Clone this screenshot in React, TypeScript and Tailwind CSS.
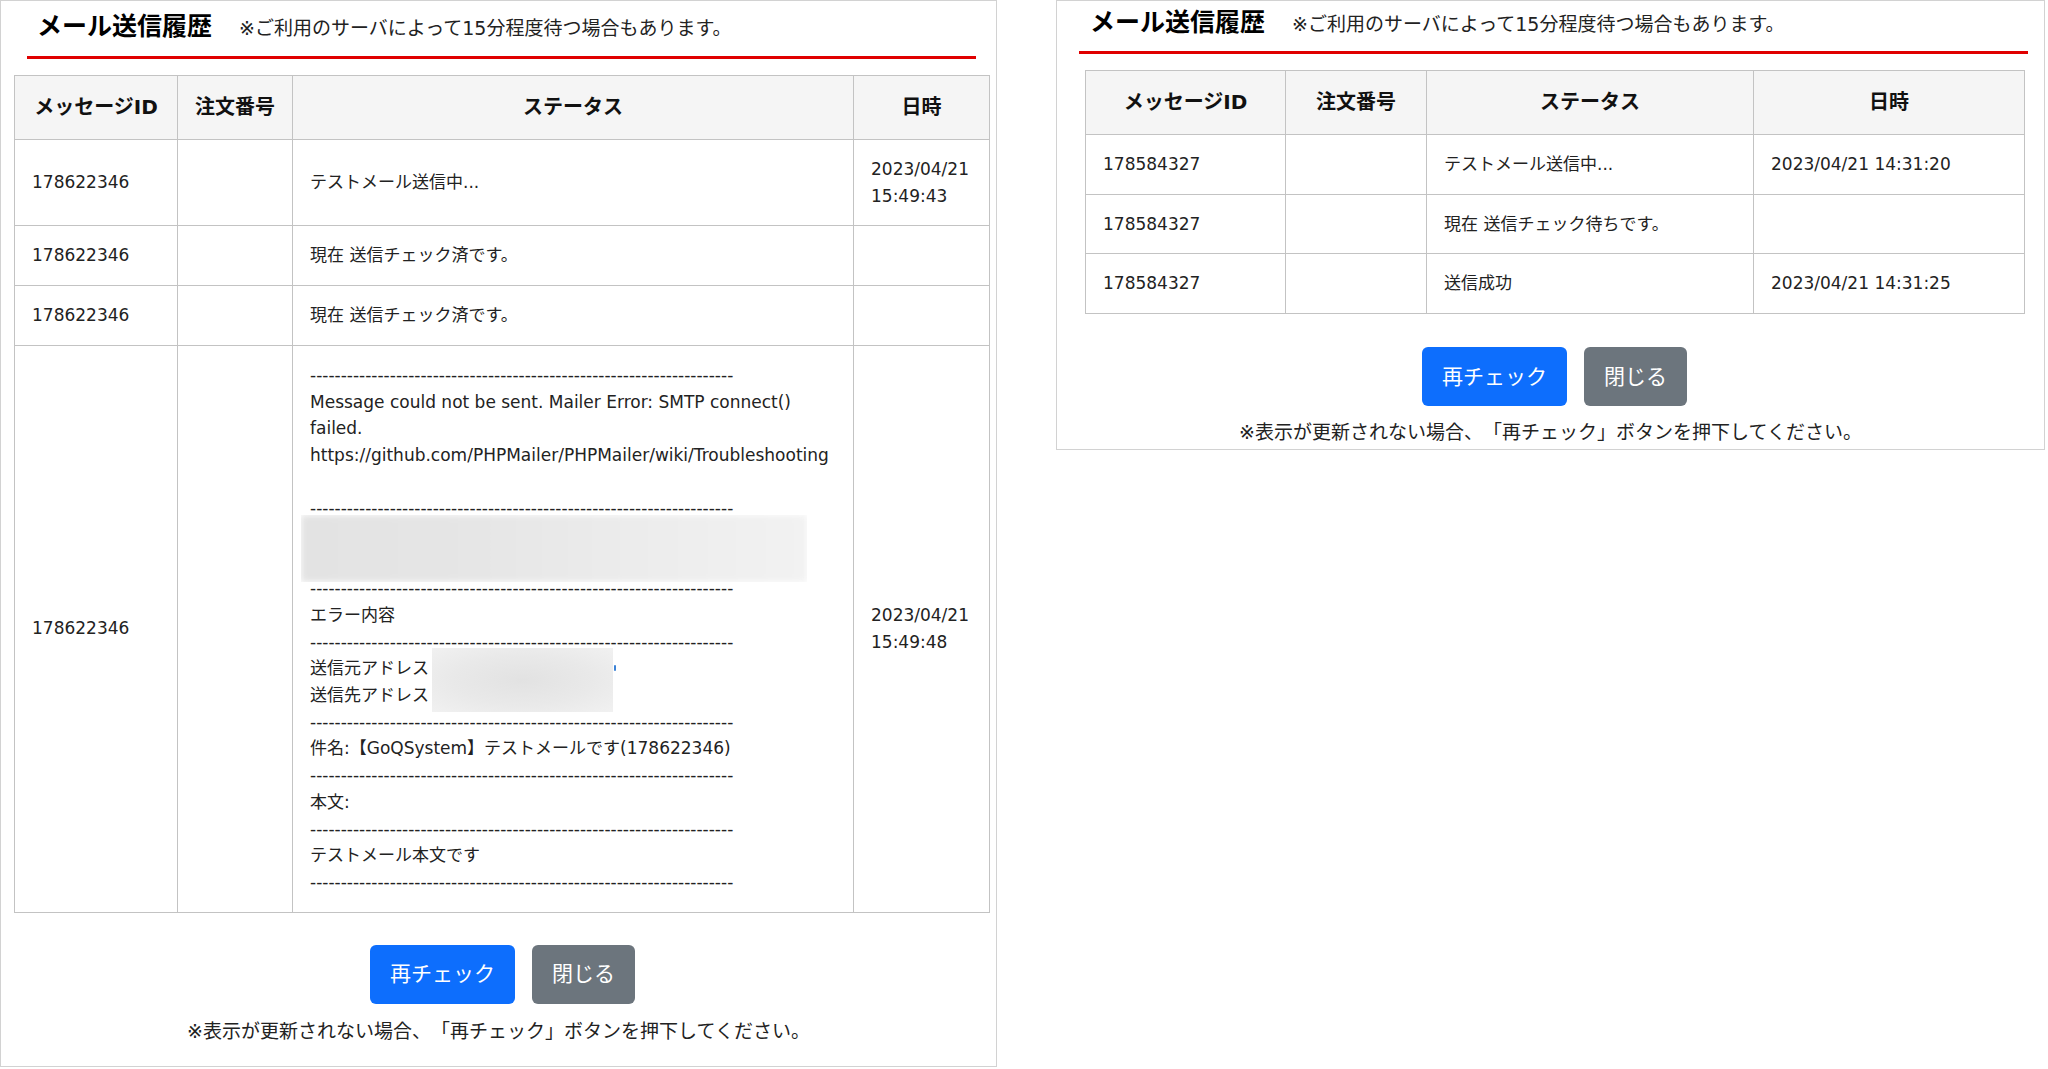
import React from "react";

const DASH = "-".repeat(69);

type Row = { id: string; status: React.ReactNode; date: string[] };

const leftRows: Row[] = [
  { id: "178622346", status: "テストメール送信中...", date: ["2023/04/21", "15:49:43"] },
  { id: "178622346", status: "現在 送信チェック済です。", date: [] },
  { id: "178622346", status: "現在 送信チェック済です。", date: [] },
];

const rightRows: Row[] = [
  { id: "178584327", status: "テストメール送信中...", date: ["2023/04/21 14:31:20"] },
  { id: "178584327", status: "現在 送信チェック待ちです。", date: [] },
  { id: "178584327", status: "送信成功", date: ["2023/04/21 14:31:25"] },
];

function Line({ children }: { children?: React.ReactNode }) {
  return <div className="h-[26.7px] whitespace-nowrap">{children}</div>;
}

function Dashes() {
  return <Line>{DASH}</Line>;
}

function ErrorDetail() {
  return (
    <div>
      <Dashes />
      <Line>Message could not be sent. Mailer Error: SMTP connect()</Line>
      <Line>failed.</Line>
      <Line>https://github.com/PHPMailer/PHPMailer/wiki/Troubleshooting</Line>
      <Line />
      <Dashes />
      <div className="relative h-[53.4px]">
        <div className="absolute left-[-9px] top-[-7px] h-[67px] w-[506px] overflow-hidden">
          <div className="h-full w-full bg-[linear-gradient(90deg,#e3e3e3_0%,#e6e6e6_35%,#ebebeb_60%,#f2f2f2_100%)] blur-[3px]" />
        </div>
      </div>
      <Dashes />
      <Line>エラー内容</Line>
      <Dashes />
      <div className="relative">
        <Line>送信元アドレス</Line>
        <Line>送信先アドレス</Line>
        <div className="absolute left-[122px] top-[-7px] h-[64px] w-[181px] bg-[radial-gradient(ellipse_at_center,#e2e2e2_0%,#e9e9e9_55%,#f1f1f1_100%)]" />
        <div className="absolute left-[304px] top-[10px] h-[6px] w-[2px] rounded-full bg-[#3b82d6]" />
      </div>
      <Dashes />
      <Line>件名:【GoQSystem】テストメールです(178622346)</Line>
      <Dashes />
      <Line>本文:</Line>
      <Dashes />
      <Line>テストメール本文です</Line>
      <Dashes />
    </div>
  );
}

const th =
  "border border-[#c3c3c3] bg-[#f5f5f5] px-2 py-4 text-center align-middle text-[20px] leading-[31px] font-bold text-[#111]";
const td =
  "border border-[#c3c3c3] px-[17px] py-4 text-left align-middle text-[17px] leading-[26.7px] text-[#222]";

function Header({ pt }: { pt: string }) {
  return (
    <div className={pt}>
      <span className="text-[25px] leading-[36px] font-bold text-black">メール送信履歴</span>
      <span className="ml-[27px] text-[19px] leading-[36px] text-[#222]">
        ※ご利用のサーバによって15分程度待つ場合もあります。
      </span>
    </div>
  );
}

function Buttons() {
  return (
    <div className="flex justify-center gap-[17px] pl-[8px]">
      <button className="flex h-[59px] items-center rounded-[6px] bg-[#0d6efd] px-[20px] text-[21px] leading-[30px] text-white">
        再チェック
      </button>
      <button className="flex h-[59px] items-center rounded-[6px] bg-[#6c757d] px-[20px] text-[21px] leading-[30px] text-white">
        閉じる
      </button>
    </div>
  );
}

function Note({ mt }: { mt: string }) {
  return (
    <div className={`${mt} text-center text-[19px] leading-[27px] text-[#222]`}>
      ※表示が更新されない場合、「再チェック」ボタンを押下してください。
    </div>
  );
}

export default function App() {
  return (
    <div className="flex h-[1069px] w-[2048px] items-start gap-[59px] bg-white font-['DejaVu_Sans','Noto_Sans_CJK_JP',sans-serif] [text-spacing-trim:space-all]">
      {/* Left panel */}
      <div className="w-[997px] border border-[#d2d2d2] pb-[21px]">
        <div className="ml-[26px] mr-[20px] border-b-[3px] border-[#e00000] pb-[10px] pl-[10px]">
          <Header pt="pt-[8px]" />
        </div>
        <table className="ml-[13px] mt-[16px] w-[975px] table-fixed border-collapse">
          <colgroup>
            <col className="w-[163px]" />
            <col className="w-[115px]" />
            <col className="w-[561px]" />
            <col className="w-[136px]" />
          </colgroup>
          <thead>
            <tr>
              <th className={th}>メッセージID</th>
              <th className={th}>注文番号</th>
              <th className={th}>ステータス</th>
              <th className={th}>日時</th>
            </tr>
          </thead>
          <tbody>
            {leftRows.map((r, i) => (
              <tr key={i}>
                <td className={td}>{r.id}</td>
                <td className={td}></td>
                <td className={td}>{r.status}</td>
                <td className={td}>
                  {r.date.map((d, j) => (
                    <div key={j} className="whitespace-nowrap">
                      {d}
                    </div>
                  ))}
                </td>
              </tr>
            ))}
            <tr>
              <td className={td}>178622346</td>
              <td className={td}></td>
              <td className={td}>
                <ErrorDetail />
              </td>
              <td className={td}>
                <div className="whitespace-nowrap">2023/04/21</div>
                <div className="whitespace-nowrap">15:49:48</div>
              </td>
            </tr>
          </tbody>
        </table>
        <div className="mt-[32px]">
          <Buttons />
        </div>
        <Note mt="mt-[14px]" />
      </div>

      {/* Right panel */}
      <div className="w-[989px] border border-[#d2d2d2] pb-[3px]">
        <div className="ml-[22px] mr-[16px] border-b-[3px] border-[#e00000] pb-[9px] pl-[11px]">
          <Header pt="pt-[4px]" />
        </div>
        <table className="ml-[28px] mt-[16px] w-[939px] table-fixed border-collapse">
          <colgroup>
            <col className="w-[200px]" />
            <col className="w-[141px]" />
            <col className="w-[327px]" />
            <col className="w-[271px]" />
          </colgroup>
          <thead>
            <tr>
              <th className={th}>メッセージID</th>
              <th className={th}>注文番号</th>
              <th className={th}>ステータス</th>
              <th className={th}>日時</th>
            </tr>
          </thead>
          <tbody>
            {rightRows.map((r, i) => (
              <tr key={i}>
                <td className={td}>{r.id}</td>
                <td className={td}></td>
                <td className={td}>{r.status}</td>
                <td className={td}>
                  {r.date.map((d, j) => (
                    <div key={j} className="whitespace-nowrap">
                      {d}
                    </div>
                  ))}
                </td>
              </tr>
            ))}
          </tbody>
        </table>
        <div className="mt-[33px]">
          <Buttons />
        </div>
        <Note mt="mt-[13px]" />
      </div>
    </div>
  );
}
